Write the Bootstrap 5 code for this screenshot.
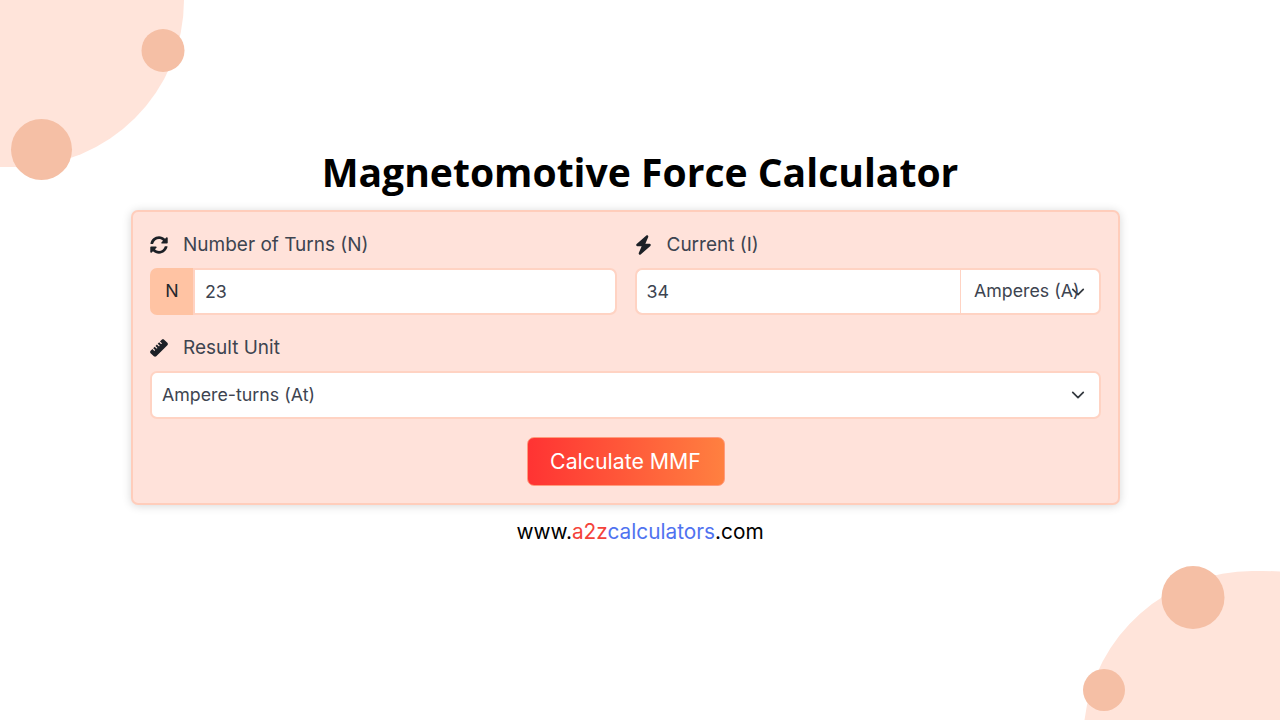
<!DOCTYPE html>
<html lang="en">
<head>
    <meta charset="UTF-8">
    <meta name="viewport" content="width=device-width, initial-scale=1.0">
    <title>Magnetomotive Force Calculator</title>

    <link href="https://cdn.jsdelivr.net/npm/bootstrap@5.3.0/dist/css/bootstrap.min.css" rel="stylesheet">
    <script src="https://cdn.jsdelivr.net/npm/bootstrap@5.3.0/dist/js/bootstrap.bundle.min.js"></script>

    <style>
        body {
            background-color: #fff;
            font-family: "Inter", "Liberation Sans", sans-serif;
        }
        .deco {
            position: absolute;
            left: 0;
            top: 0;
        }
        .deco-soft { fill: #ffe4da; }
        .deco-dot { fill: #f5bfa5; }

        .page-wrap {
            position: relative;
            padding-top: 146px;
        }
        .page-title {
            font-family: "Open Sans", sans-serif;
            font-weight: 700;
            font-size: 39.1px;
            line-height: 52px;
            color: #000;
            margin-bottom: 12px;
        }
        .calc-box {
            width: 989px;
            margin-left: 131px;
            padding: 19px 17px 17px;
            background-color: #ffe2da;
            border: 2px solid #ffcdbb;
            border-radius: 7px;
            box-shadow: 0 1px 10px rgba(0, 0, 0, 0.16);
        }
        .calc-label {
            font-size: 19px;
            line-height: 27px;
            color: #3d4450;
            margin-bottom: 10px;
            display: flex;
            align-items: center;
        }
        .calc-label svg {
            width: 18px;
            height: 18px;
            margin-right: 15px;
            fill: #1c2026;
            flex: none;
        }
        .calc-label .bolt-icon {
            width: 17px;
            height: 20px;
        }
        .calc-box .form-control,
        .calc-box .form-select,
        .calc-box .input-group-text {
            font-size: 17.8px;
            height: 47px;
            padding-left: 10px;
            color: #3d4450;
            border: 2px solid #ffd3c3;
            border-radius: 7px;
        }
        .calc-box .input-group-text {
            width: 44px;
            justify-content: center;
            padding: 0;
            background-color: #ffc3a3;
            border-color: #ffc3a3;
            color: #24282e;
        }
        .calc-box .form-select {
            background-size: 18px 14px;
        }
        .calc-box .value-input {
            border-right: 0;
        }
        .calc-box .unit-select {
            flex: 0 0 141px;
            width: 141px;
            padding-left: 13px;
            padding-right: 12px;
            margin-left: 0;
            border-left-width: 1px;
        }
        .calc-box .full-select {
            height: 48px;
            margin-bottom: 18px;
        }
        .calc-gap { column-gap: 18px; margin-bottom: 19px; }
        .calc-btn {
            width: 198px;
            height: 49px;
            padding: 0;
            font-size: 21.3px;
            color: #fff;
            border: 1px solid #ff9b7d;
            border-radius: 7px;
            background: linear-gradient(90deg, #ff3333, #ff8040);
        }
        .site-line {
            font-size: 20.8px;
            line-height: 30px;
            color: #000;
            margin-top: 12px;
        }
        .site-red { color: #f4423a; }
        .site-blue { color: #4f72f0; }
    </style>
</head>
<body>
    <svg class="deco" width="1280" height="720" viewBox="0 0 1280 720">
        <path class="deco-soft" d="M0 0H184A167 167 0 0 1 17 167H0Z"/>
        <path class="deco-soft" d="M1280 571.5V720H1084.5A169 169 0 0 1 1253 571C1262 571 1271 571 1280 571.5Z"/>
        <circle class="deco-dot" cx="163" cy="50.5" r="21.5"/>
        <circle class="deco-dot" cx="41.5" cy="149.5" r="30.5"/>
        <circle class="deco-dot" cx="1193" cy="597.5" r="31.5"/>
        <circle class="deco-dot" cx="1104" cy="690" r="21"/>
    </svg>

    <div class="page-wrap">
        <h1 class="page-title text-center">Magnetomotive Force Calculator</h1>

        <form class="calc-box">
            <div class="d-flex calc-gap">
                <div class="flex-fill w-50">
                    <label class="calc-label" for="turns">
                        <svg viewBox="0 0 512 512"><path d="M370.72 133.28C339.458 104.008 298.888 87.962 255.848 88c-77.458.068-144.328 53.178-162.791 126.85-1.344 5.363-6.122 9.15-11.651 9.15H24.103c-7.498 0-13.194-6.807-11.807-14.176C33.933 94.924 134.813 8 256 8c66.448 0 126.791 26.136 171.315 68.685L463.03 40.97C478.149 25.851 504 36.559 504 57.941V192c0 13.255-10.745 24-24 24H345.941c-21.382 0-32.09-25.851-16.971-40.971l41.75-41.749zM32 296h134.059c21.382 0 32.09 25.851 16.971 40.971l-41.75 41.75c31.262 29.273 71.835 45.319 114.876 45.28 77.418-.07 144.315-53.144 162.787-126.849 1.344-5.363 6.122-9.15 11.651-9.15h57.304c7.498 0 13.194 6.807 11.807 14.176C478.067 417.076 377.187 504 256 504c-66.448 0-126.791-26.136-171.315-68.685L48.97 471.03C33.851 486.149 8 475.441 8 454.059V320c0-13.255 10.745-24 24-24z"/></svg>
                        Number of Turns (N)
                    </label>
                    <div class="input-group">
                        <span class="input-group-text">N</span>
                        <input type="number" class="form-control" id="turns" value="23">
                    </div>
                </div>
                <div class="flex-fill w-50">
                    <label class="calc-label" for="current">
                        <svg class="bolt-icon" viewBox="0 0 448 512"><path d="M349.4 44.6c5.9-13.7 1.5-29.7-10.6-38.5s-28.6-8-39.9 1.8l-256 224c-10 8.8-13.6 22.9-8.9 35.3S50.7 288 64 288H175.5L98.6 467.4c-5.9 13.7-1.5 29.7 10.6 38.5s28.6 8 39.9-1.8l256-224c10-8.8 13.6-22.9 8.9-35.3s-16.6-20.7-30-20.7H272.5L349.4 44.6z"/></svg>
                        Current (I)
                    </label>
                    <div class="input-group">
                        <input type="number" class="form-control value-input" id="current" value="34">
                        <select class="form-select unit-select">
                            <option>Amperes (A)</option>
                            <option>Milliamperes (mA)</option>
                        </select>
                    </div>
                </div>
            </div>

            <label class="calc-label" for="unit">
                <svg viewBox="0 0 512 512"><path d="M177.9 494.1c-18.7 18.7-49.1 18.7-67.9 0L17.9 401.9c-18.7-18.7-18.7-49.1 0-67.9l50.7-50.7 48 48c6.2 6.2 16.4 6.2 22.6 0s6.2-16.4 0-22.6l-48-48 41.4-41.4 48 48c6.2 6.2 16.4 6.2 22.6 0s6.2-16.4 0-22.6l-48-48 41.4-41.4 48 48c6.2 6.2 16.4 6.2 22.6 0s6.2-16.4 0-22.6l-48-48 41.4-41.4 48 48c6.2 6.2 16.4 6.2 22.6 0s6.2-16.4 0-22.6l-48-48 50.7-50.7c18.7-18.7 49.1-18.7 67.9 0l92.1 92.1c18.7 18.7 18.7 49.1 0 67.9L177.9 494.1z"/></svg>
                Result Unit
            </label>
            <select class="form-select full-select" id="unit">
                <option>Ampere-turns (At)</option>
                <option>Gilberts (Gb)</option>
            </select>

            <div class="text-center">
                <button type="button" class="btn calc-btn">Calculate MMF</button>
            </div>
        </form>

        <div class="site-line text-center">www.<span class="site-red">a2z</span><span class="site-blue">calculators</span>.com</div>
    </div>
</body>
</html>
